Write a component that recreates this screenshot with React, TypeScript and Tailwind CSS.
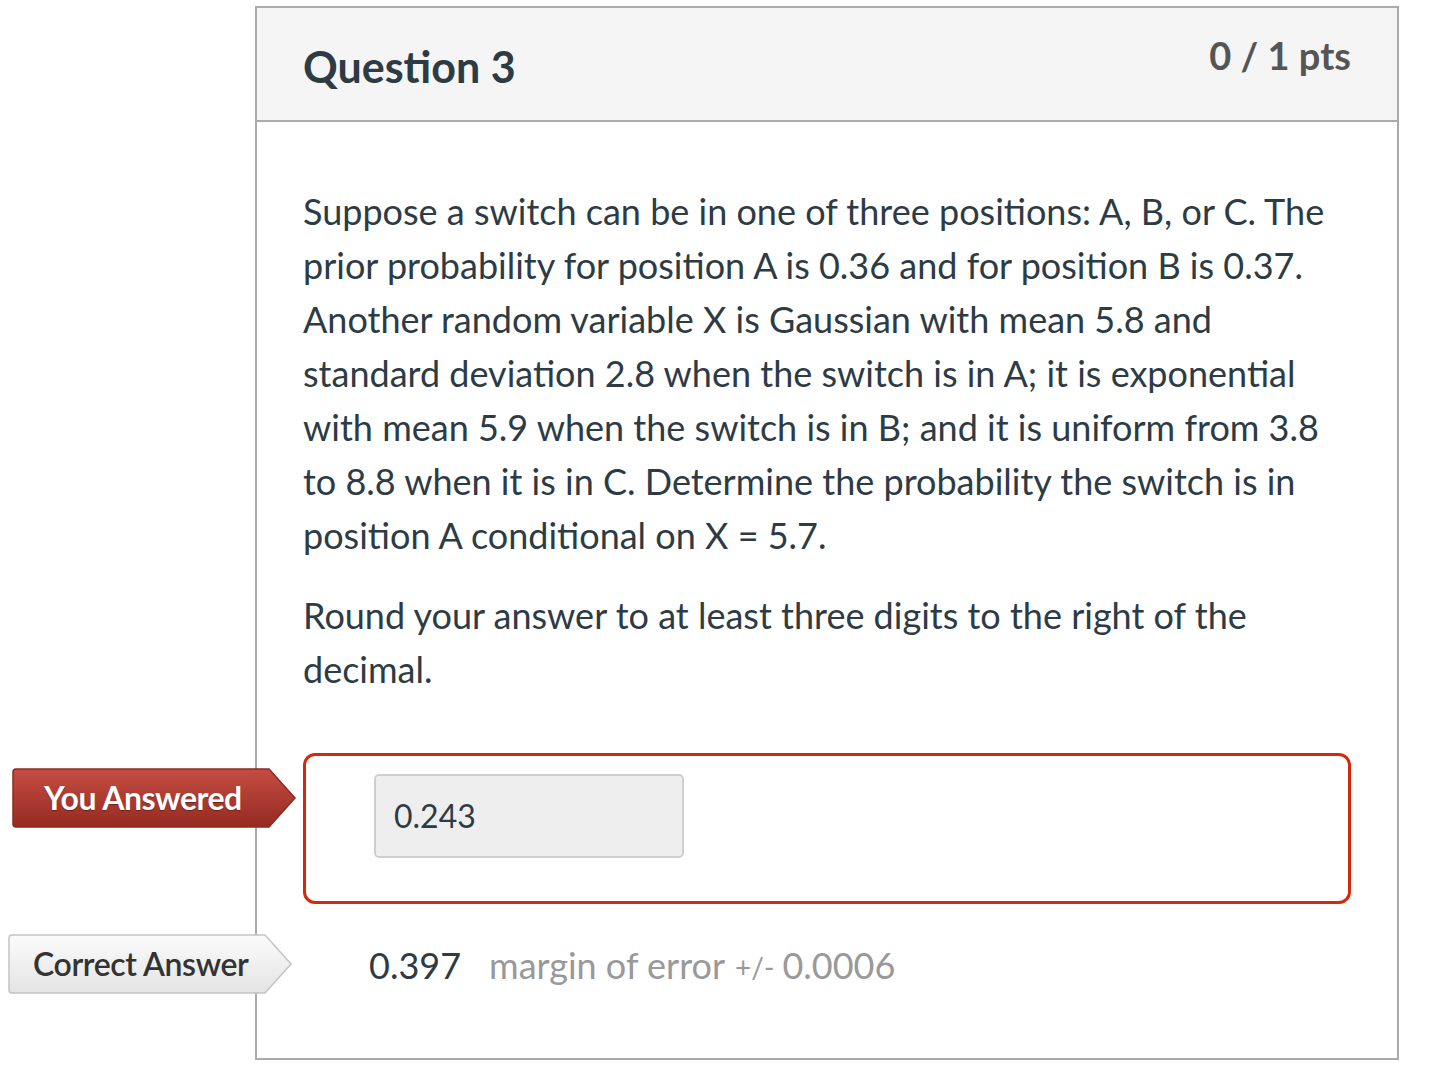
import React from "react";

function Label({ kind }: { kind: "you" | "correct" }) {
  const you = kind === "you";
  return (
    <div className="relative w-[287px] h-[60px]">
      <svg width="287" height="60" viewBox="0 0 287 60" className="absolute left-0 top-0">
        <defs>
          <linearGradient id="gy" x1="0" y1="0" x2="0" y2="1">
            <stop offset="0" stopColor="#c44d43" />
            <stop offset="1" stopColor="#962a21" />
          </linearGradient>
          <linearGradient id="gc" x1="0" y1="0" x2="0" y2="1">
            <stop offset="0" stopColor="#fbfbfb" />
            <stop offset="1" stopColor="#e4e4e4" />
          </linearGradient>
        </defs>
        <path
          d="M4 1 H257 L283 30 L257 59 H4 Q1 59 1 56 V4 Q1 1 4 1 Z"
          fill={you ? "url(#gy)" : "url(#gc)"}
          stroke={you ? "#8e2a22" : "#c4c4c4"}
          strokeWidth="1.5"
        />
      </svg>
      <div
        className={
          you
            ? "absolute inset-0 flex items-center pl-[32px] text-[32px] font-bold text-white tracking-[-0.5px] [text-shadow:0_1px_1px_rgba(0,0,0,0.35)]"
            : "absolute inset-0 flex items-center pl-[25px] text-[32px] font-semibold text-[#333] tracking-[-0.4px]"
        }
      >
        {you ? "You Answered" : "Correct Answer"}
      </div>
    </div>
  );
}

export default function App() {
  return (
    <div className="min-h-[1090px] bg-white pt-[6px] font-['Lato','Noto_Sans',sans-serif]">
      <div className="relative ml-[255px] w-[1144px] h-[1054px] border-2 border-[#aaaaaa] bg-white">
        <div className="flex justify-between h-[114px] bg-[#f5f5f5] border-b-2 border-[#aaaaaa] px-[46px]">
          <div className="pt-[37px] text-[43px] leading-[1] font-bold text-[#2d3b45]">Question 3</div>
          <div className="pt-[28px] text-[38px] leading-[1] font-bold text-[#555555]">0 / 1 pts</div>
        </div>
        <div className="px-[46px] pt-[62px] text-[#2d3b45]">
          <p className="text-[36px] leading-[54px]">
            Suppose a switch can be in one of three positions: A, B, or C. The prior probability for position A is 0.36 and for position B is 0.37. Another random variable X is Gaussian with mean 5.8 and standard deviation 2.8 when the switch is in A; it is exponential with mean 5.9 when the switch is in B; and it is uniform from 3.8 to 8.8 when it is in C. Determine the probability the switch is in position A conditional on X = 5.7.
          </p>
          <p className="mt-[26px] text-[36px] leading-[54px]">
            Round your answer to at least three digits to the right of the decimal.
          </p>
          <div className="relative mt-[57px]">
            <div className="absolute left-[-291px] top-[15px]">
              <Label kind="you" />
            </div>
            <div className="h-[151px] border-[3px] border-[#d5290e] rounded-[12px] pl-[68px] pt-[18px]">
              <div className="w-[310px] h-[84px] bg-[#eeeeee] border-2 border-[#cfcfcf] rounded-[5px] flex items-center pl-[18px] text-[32px] text-[#2d3b45]">
                0.243
              </div>
            </div>
          </div>
          <div className="relative mt-[31px] flex items-center h-[60px] pl-[66px]">
            <div className="absolute left-[-295px] top-[-1px]">
              <Label kind="correct" />
            </div>
            <span className="text-[36px] text-[#2d3b45]">0.397</span>
            <span className="ml-[28px] text-[36px] text-[#999999]">margin of error</span>
            <span className="ml-[10px] text-[28px] text-[#999999] mt-[4px]">+/-</span>
            <span className="ml-[8px] text-[36px] text-[#999999]">0.0006</span>
          </div>
        </div>
      </div>
    </div>
  );
}
